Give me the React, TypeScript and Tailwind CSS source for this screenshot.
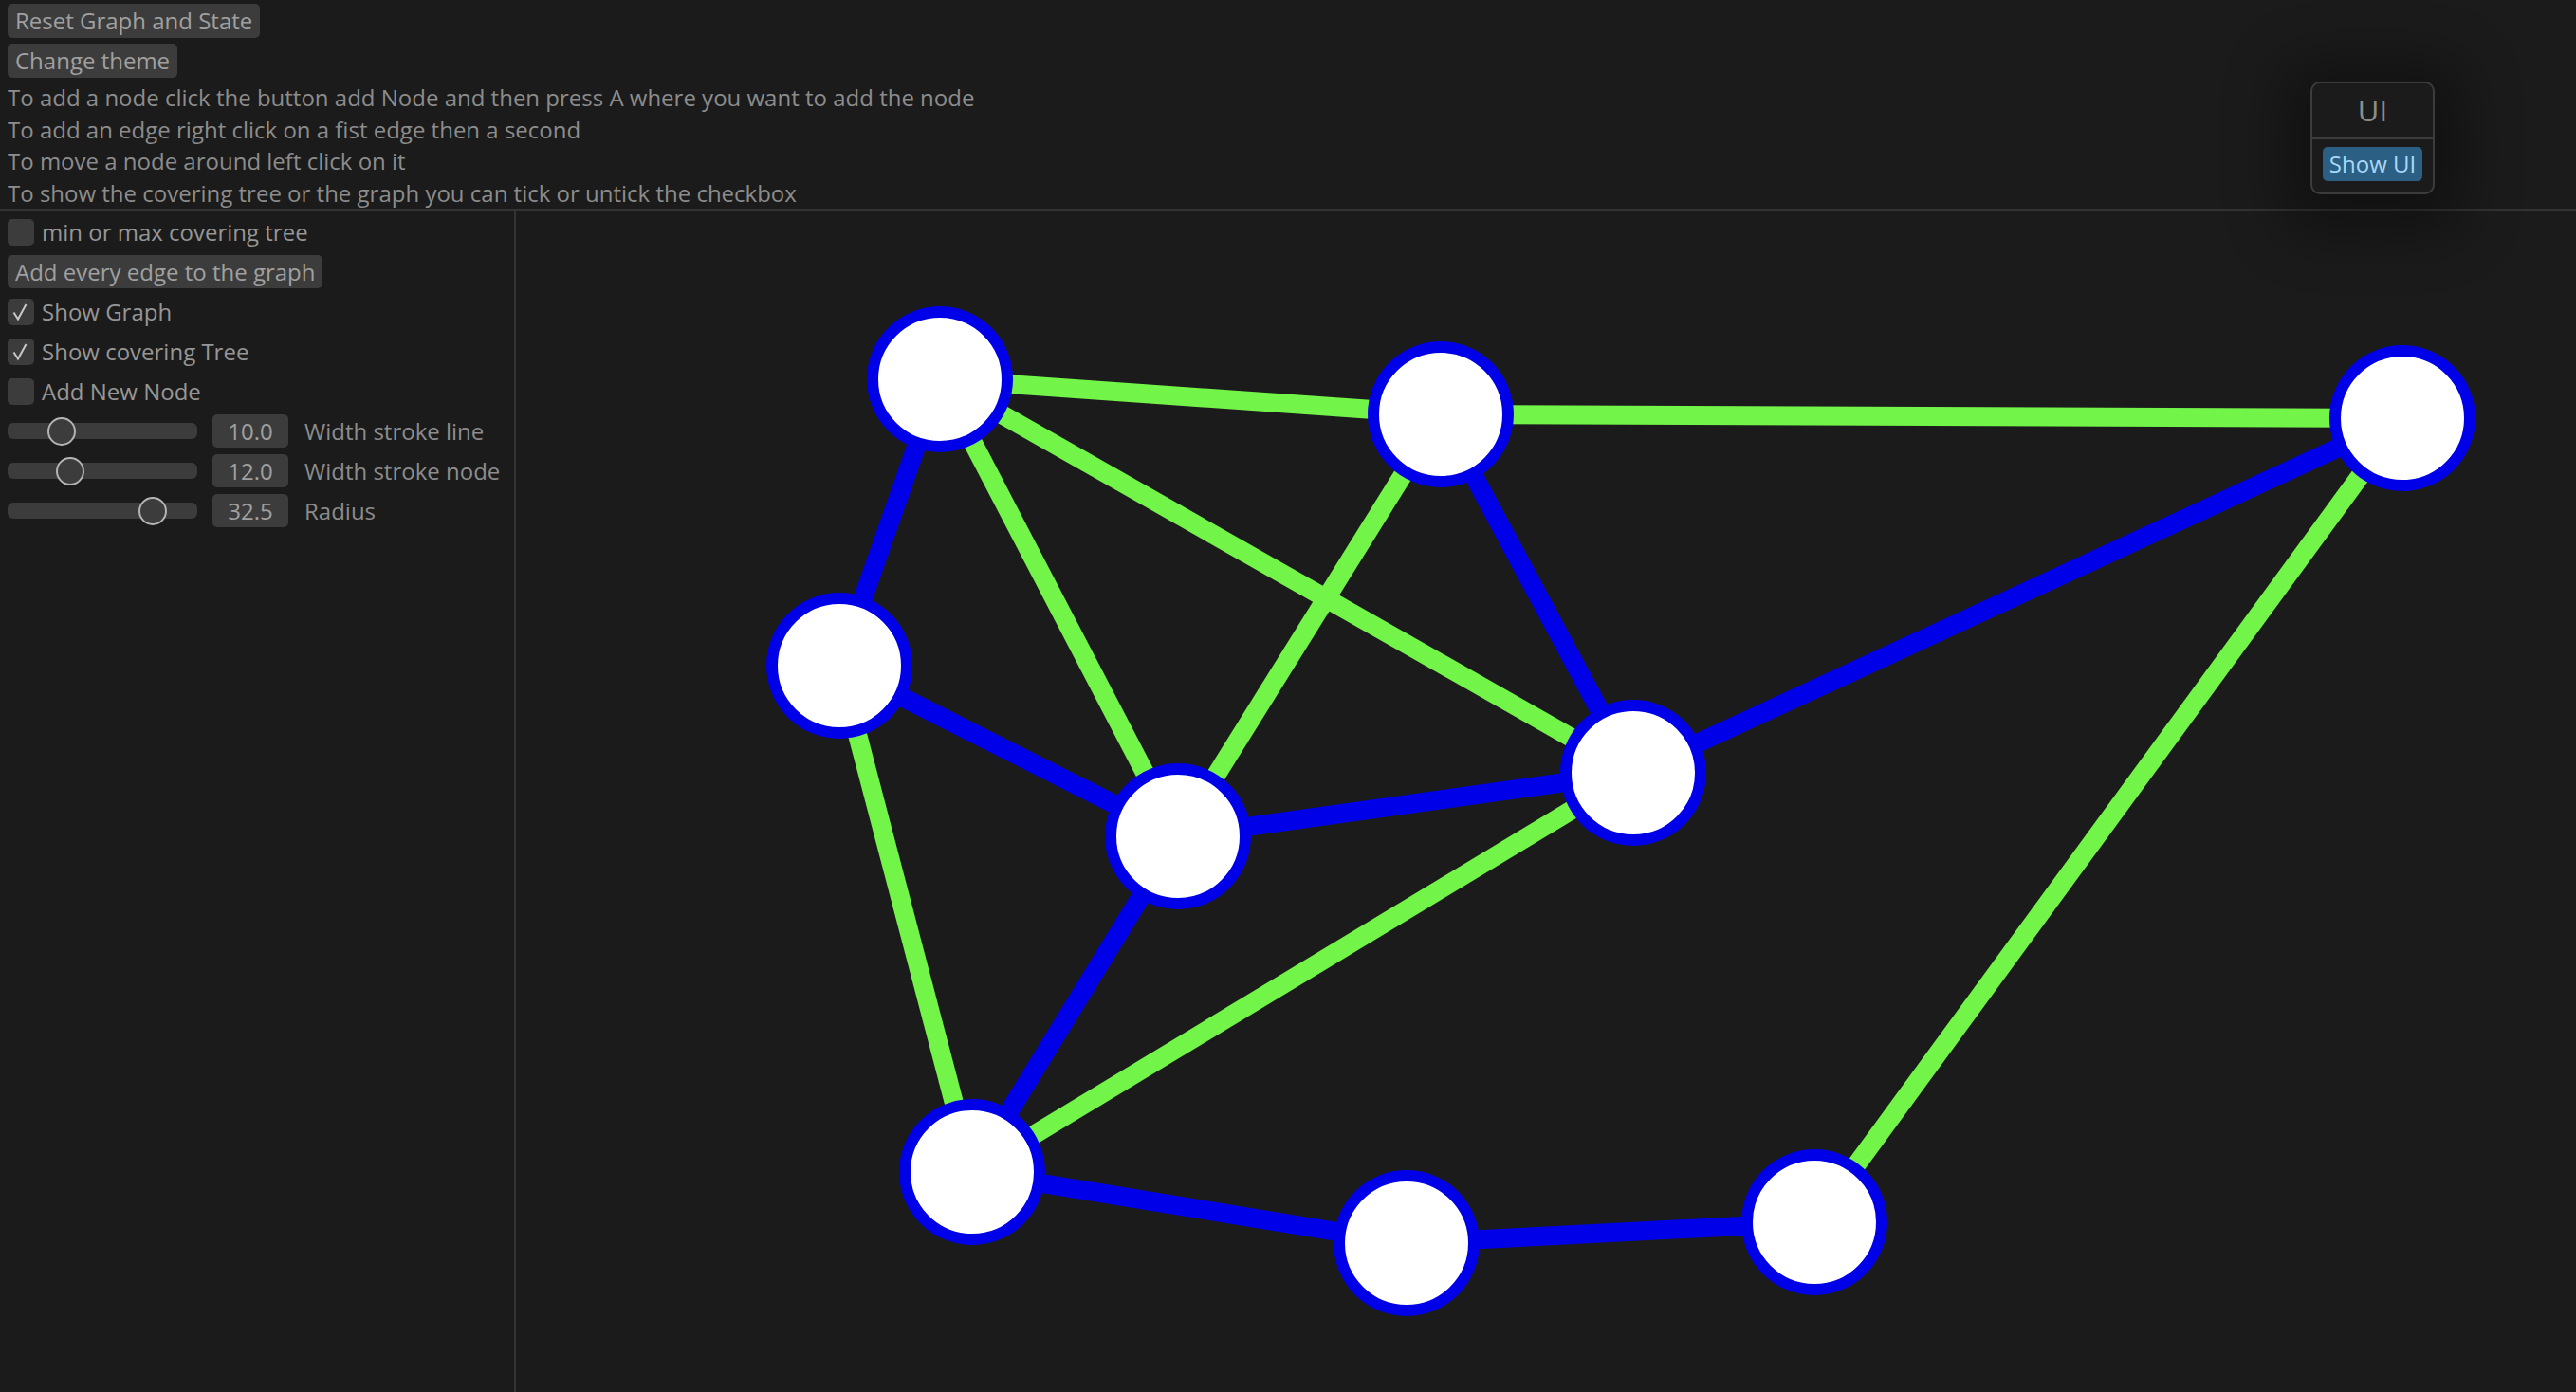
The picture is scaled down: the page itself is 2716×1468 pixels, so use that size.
import React from "react";

type Node = { x: number; y: number };

// page coordinates of the node centres
const nodes: Node[] = [
  { x: 991, y: 399 },
  { x: 1519, y: 436 },
  { x: 2533, y: 440 },
  { x: 885, y: 701 },
  { x: 1242, y: 881 },
  { x: 1722, y: 814 },
  { x: 1025, y: 1235 },
  { x: 1483, y: 1310 },
  { x: 1913, y: 1288 },
];

const graphEdges: [number, number][] = [
  [0, 1],
  [1, 2],
  [0, 5],
  [0, 4],
  [1, 4],
  [3, 6],
  [6, 5],
  [2, 8],
];

const treeEdges: [number, number][] = [
  [0, 3],
  [3, 4],
  [4, 5],
  [1, 5],
  [5, 2],
  [4, 6],
  [6, 7],
  [7, 8],
];

const CANVAS_X = 544;
const CANVAS_Y = 221;

function Button({ label }: { label: string }) {
  return (
    <button className="h-[36px] px-[8px] rounded-[5px] bg-[#3c3c3c] text-[#a0a0a0] leading-none self-start">
      {label}
    </button>
  );
}

function Checkbox({ label, checked }: { label: string; checked?: boolean }) {
  return (
    <div className="h-[35px] flex items-center gap-[8px]">
      <div className="w-[28px] h-[28px] rounded-[5px] bg-[#3c3c3c] flex items-center justify-center">
        {checked && (
          <svg width="28" height="28" viewBox="0 0 28 28">
            <path d="M6.5 14.5 L11 21.5 L19.5 6" fill="none" stroke="#c8c8c8" strokeWidth="2" />
          </svg>
        )}
      </div>
      <span className="text-[#969696]">{label}</span>
    </div>
  );
}

function Slider({ value, handle, label }: { value: string; handle: number; label: string }) {
  return (
    <div className="h-[35px] flex items-center">
      <div className="relative w-[200px] h-[17px] rounded-[6px] bg-[#3c3c3c]">
        <div
          className="absolute top-1/2 w-[30px] h-[30px] -mt-[15px] -ml-[15px] rounded-full bg-[#3c3c3c] border-2 border-[#b4b4b4]"
          style={{ left: handle }}
        />
      </div>
      <div className="ml-[16px] w-[80px] h-[35px] rounded-[5px] bg-[#3c3c3c] flex items-center justify-center text-[#a0a0a0]">
        {value}
      </div>
      <span className="ml-[17px] text-[#8c8c8c]">{label}</span>
    </div>
  );
}

function Graph() {
  const line = (e: [number, number], color: string, key: string) => (
    <line
      key={key}
      x1={nodes[e[0]].x}
      y1={nodes[e[0]].y}
      x2={nodes[e[1]].x}
      y2={nodes[e[1]].y}
      stroke={color}
      strokeWidth={20}
    />
  );
  return (
    <svg className="absolute inset-0 w-full h-full">
      <g transform={`translate(${-CANVAS_X} ${-CANVAS_Y})`}>
        {graphEdges.map((e, i) => line(e, "#72f548", "g" + i))}
        {treeEdges.map((e, i) => line(e, "#0000e8", "t" + i))}
        {nodes.map((n, i) => (
          <circle key={i} cx={n.x} cy={n.y} r={71} fill="#ffffff" stroke="#0000e8" strokeWidth={12} />
        ))}
      </g>
    </svg>
  );
}

export default function App() {
  return (
    <div
      className="relative w-[2716px] h-[1468px] overflow-hidden bg-[#1b1b1b] text-[24px] text-[#8c8c8c] flex flex-col"
      style={{ fontFamily: '"Open Sans", "Noto Sans", sans-serif' }}
    >
      <div className="h-[216px] border-b-2 border-[#333333] box-content px-[8px] pt-[4px] flex flex-col">
        <Button label="Reset Graph and State" />
        <div className="h-[6px]" />
        <Button label="Change theme" />
        <div className="mt-[4px] flex flex-col leading-[33.5px]">
          <span>To add a node click the button add Node and then press A where you want to add the node</span>
          <span>To add an edge right click on a fist edge then a second</span>
          <span>To move a node around left click on it</span>
          <span>To show the covering tree or the graph you can tick or untick the checkbox</span>
        </div>
      </div>

      <div className="flex-1 flex">
        <div className="w-[544px] border-r-2 border-[#333333] px-[8px] pt-[5px] flex flex-col gap-[7px]">
          <Checkbox label="min or max covering tree" />
          <div className="h-[35px] flex items-center">
            <button className="h-[35px] px-[8px] rounded-[5px] bg-[#3c3c3c] text-[#a0a0a0] leading-none">
              Add every edge to the graph
            </button>
          </div>
          <Checkbox label="Show Graph" checked />
          <Checkbox label="Show covering Tree" checked />
          <Checkbox label="Add New Node" />
          <Slider value="10.0" handle={57} label="Width stroke line" />
          <Slider value="12.0" handle={66} label="Width stroke node" />
          <Slider value="32.5" handle={153} label="Radius" />
        </div>
        <div className="relative flex-1">
          <Graph />
        </div>
      </div>

      {/* floating UI window */}
      <div className="absolute left-[2436px] top-[86px] w-[131px] rounded-[10px] border-2 border-[#3c3c3c] bg-[#1b1b1b] shadow-[0_10px_60px_30px_rgba(0,0,0,0.35)] flex flex-col">
        <div className="h-[59px] flex items-center justify-center text-[31px] text-[#8c8c8c] border-b-2 border-[#3c3c3c]">
          UI
        </div>
        <div className="flex justify-center pt-[8px] pb-[12px]">
          <button className="h-[36px] px-[7px] rounded-[5px] bg-[#2b5f84] text-[#a8d8f8] leading-none">
            Show UI
          </button>
        </div>
      </div>
    </div>
  );
}
